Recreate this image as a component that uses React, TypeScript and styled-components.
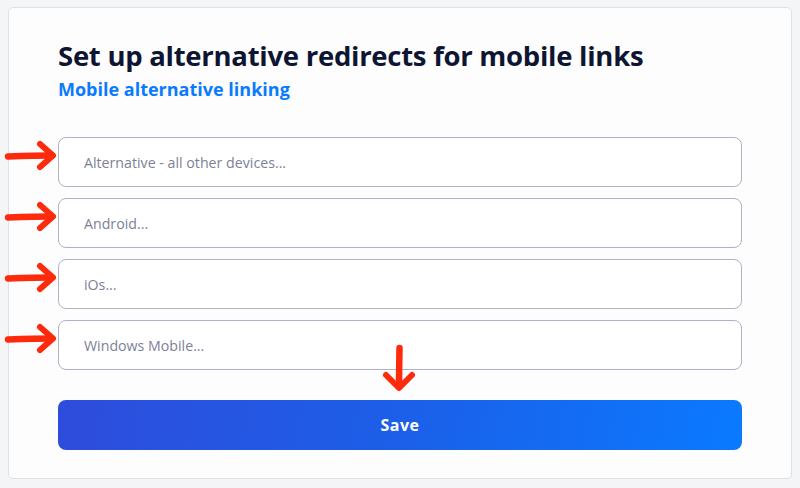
import React from 'react'
import styled, { createGlobalStyle } from 'styled-components'

const GlobalStyle = createGlobalStyle`
  html, body {
    margin: 0;
    padding: 0;
    background: #f4f5f7;
  }
  body {
    font-family: 'Open Sans', 'Noto Sans', sans-serif;
  }
  * {
    box-sizing: border-box;
  }
`

const Page = styled.div`
  padding: 7px 8px 9px 8px;
  width: 800px;
  height: 488px;
`

const Card = styled.div`
  height: 472px;
  background: #fdfdfd;
  border: 1px solid #dfe1e5;
  border-radius: 5px;
  padding: 31px 49px 0 49px;
`

const Title = styled.h1`
  margin: 0;
  font-size: 27.5px;
  font-weight: 700;
  color: #0d1533;
  line-height: 34px;
  letter-spacing: -0.27px;
`

const Subtitle = styled.h2`
  margin: 4px 0 0 0;
  font-size: 18px;
  font-weight: 700;
  color: #0a7aff;
  line-height: 24px;
`

const Form = styled.form`
  margin-top: 36px;
  display: flex;
  flex-direction: column;
  gap: 11px;
`

const Field = styled.div`
  position: relative;
`

const Input = styled.input`
  width: 100%;
  height: 50px;
  border: 1px solid #aeb2c4;
  border-radius: 8px;
  background: #fff;
  padding: 0 25px;
  font-family: 'Open Sans', 'Noto Sans', sans-serif;
  font-size: 14.2px;
  color: #1a1f36;
  outline: none;
  &::placeholder {
    color: #7d8196;
  }
`

const SideArrow = styled.svg`
  position: absolute;
  left: -52px;
  top: 5px;
  width: 50px;
  height: 30px;
  overflow: visible;
`

const ButtonWrap = styled.div`
  position: relative;
  margin-top: 19px;
`

const DownArrow = styled.svg`
  position: absolute;
  left: 326px;
  top: -55px;
  width: 30px;
  height: 50px;
  overflow: visible;
`

const SaveButton = styled.button`
  width: 100%;
  height: 50px;
  border: none;
  border-radius: 8px;
  background: linear-gradient(100deg, #2f4cdc 0%, #1c5fe8 50%, #0a7aff 100%);
  color: #fff;
  font-family: 'Open Sans', 'Noto Sans', sans-serif;
  font-size: 16px;
  font-weight: 700;
  letter-spacing: 0.5px;
  cursor: pointer;
`

const arrowRed = '#fe2a0c'

const RightArrow = () => (
  <SideArrow viewBox="0 0 50 30">
    <path
      d="M2 14.5 C 16 14, 30 13.5, 46 13.5"
      fill="none"
      stroke={arrowRed}
      strokeWidth="6.5"
      strokeLinecap="round"
    />
    <path
      d="M34 2 L 47 13.5 L 34 25"
      fill="none"
      stroke={arrowRed}
      strokeWidth="6"
      strokeLinecap="round"
      strokeLinejoin="round"
    />
  </SideArrow>
)

const fields = [
  'Alternative - all other devices...',
  'Android...',
  'iOs...',
  'Windows Mobile...'
]

const App = () => {
  return (
    <>
      <GlobalStyle />
      <Page>
        <Card>
          <Title>Set up alternative redirects for mobile links</Title>
          <Subtitle>Mobile alternative linking</Subtitle>
          <Form onSubmit={e => e.preventDefault()}>
            {fields.map(placeholder => (
              <Field key={placeholder}>
                <RightArrow />
                <Input type="text" placeholder={placeholder} />
              </Field>
            ))}
            <ButtonWrap>
              <DownArrow viewBox="0 0 30 50">
                <path
                  d="M15.5 3 C 15.3 16, 15 30, 15 42"
                  fill="none"
                  stroke={arrowRed}
                  strokeWidth="6.5"
                  strokeLinecap="round"
                />
                <path
                  d="M2 30 L 15 43 L 28 30"
                  fill="none"
                  stroke={arrowRed}
                  strokeWidth="6"
                  strokeLinecap="round"
                  strokeLinejoin="round"
                />
              </DownArrow>
              <SaveButton type="submit">Save</SaveButton>
            </ButtonWrap>
          </Form>
        </Card>
      </Page>
    </>
  )
}

export default App
